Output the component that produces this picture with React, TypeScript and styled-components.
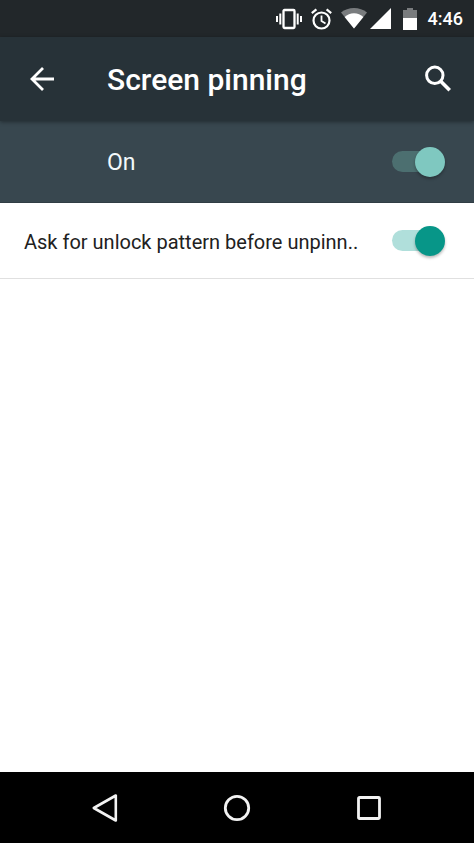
import React, { useState } from "react";
import styled, { createGlobalStyle } from "styled-components";

const GlobalStyle = createGlobalStyle`
  *, *::before, *::after { box-sizing: border-box; }
  body {
    margin: 0;
    background: #ffffff;
    font-family: Roboto, "Liberation Sans", sans-serif;
  }
`;

const Screen = styled.div`
  display: flex;
  flex-direction: column;
  min-height: 100vh;
`;

const StatusBar = styled.div`
  display: flex;
  align-items: center;
  justify-content: flex-end;
  height: 37px;
  padding-right: 11px;
  background: #22272a;
  color: #ffffff;

  svg { display: block; flex: none; }
`;

const Notifications = styled.div`
  display: flex;
  align-items: center;
  gap: 9px;
  margin-right: 9px;
`;

const Signals = styled.div`
  display: flex;
  align-items: center;
  gap: 3px;
  margin-right: 12px;
`;

const Clock = styled.time`
  margin-left: 11px;
  font-size: 18px;
  line-height: 24px;
  font-weight: 500;
`;

const AppBar = styled.header`
  display: flex;
  align-items: center;
  height: 84px;
  padding: 0 16px 0 22px;
  background: #273238;
  color: #ffffff;
  z-index: 1;
  box-shadow: 0 1px 4px rgba(0, 0, 0, 0.4);
`;

const IconButton = styled.button`
  display: flex;
  align-items: center;
  justify-content: center;
  width: 40px;
  height: 48px;
  padding: 0;
  border: 0;
  background: none;
  color: inherit;
  cursor: pointer;
`;

const Title = styled.h1`
  flex: 1;
  margin: 0 0 0 45px;
  padding-top: 2px;
  font-size: 30px;
  line-height: 40px;
  font-weight: 500;
`;

const SettingRow = styled.label<{ $primary?: boolean }>`
  display: flex;
  align-items: center;
  justify-content: space-between;
  height: ${(p) => (p.$primary ? 82 : 76)}px;
  padding: 0 29px 0 ${(p) => (p.$primary ? 107 : 24)}px;
  border-bottom: 1px solid ${(p) => (p.$primary ? "#303d44" : "#e0e0e0")};
  background: ${(p) => (p.$primary ? "#38474f" : "#ffffff")};
  color: ${(p) => (p.$primary ? "#f3f9fb" : "#212121")};
  font-size: ${(p) => (p.$primary ? 23 : 20)}px;
  line-height: 28px;
  cursor: pointer;
`;

const RowText = styled.span`
  padding-top: 2px;
  white-space: nowrap;
`;

const Switch = styled.input<{ $track: string; $thumb: string }>`
  appearance: none;
  display: flex;
  align-items: center;
  flex: none;
  width: 53px;
  height: 30px;
  margin: 0;
  border-radius: 15px;
  cursor: pointer;

  &::before {
    content: "";
    width: 48px;
    height: 21px;
    border-radius: 11px;
    background: ${(p) => p.$track};
  }

  &::after {
    content: "";
    flex: none;
    width: 30px;
    height: 30px;
    margin-left: -25px;
    border-radius: 50%;
    background: ${(p) => p.$thumb};
    box-shadow: 0 2px 3px rgba(0, 0, 0, 0.28);
  }

  &:not(:checked)::after {
    margin-left: -48px;
    background: #ececec;
  }
`;

const Content = styled.main`
  flex: 1;
  background: #ffffff;
`;

const NavBar = styled.nav`
  display: grid;
  grid-template-columns: repeat(3, 1fr);
  align-items: center;
  justify-items: center;
  height: 71px;
  padding: 0 39px;
  background: #000000;
  color: #f2f2f2;
`;

const VibrateIcon = () => (
  <svg width="26" height="22" viewBox="0 0 26 22" fill="none" stroke="currentColor" strokeWidth="2">
    <rect x="7.5" y="2" width="11" height="18" rx="1" strokeWidth="2.3" />
    <path d="M4.3 5.5v11M1 8v6M21.7 5.5v11M25 8v6" />
  </svg>
);

const AlarmIcon = () => (
  <svg width="21" height="22" viewBox="0 0 21 22" fill="none" stroke="currentColor" strokeWidth="2.2">
    <circle cx="10.5" cy="12.5" r="8" />
    <path d="M10.5 7.5v5.5l4 2.5" strokeWidth="1.8" />
    <path d="M.8 5.2l4.6-3.9M20.2 5.2l-4.6-3.9" />
  </svg>
);

const WifiIcon = () => (
  <svg width="26" height="21" viewBox="0 0 26 21">
    <path d="M13 20.5L0 4.5C3.6 1.6 8.1 0 13 0s9.4 1.6 13 4.5z" fill="#797c7e" />
    <path d="M13 20.5L3.6 9C6.2 6.7 9.4 5.3 13 5.3S19.8 6.7 22.4 9z" fill="#ffffff" />
  </svg>
);

const CellIcon = () => (
  <svg width="21" height="21" viewBox="0 0 21 21">
    <path d="M0 21L21 0v21z" fill="#ffffff" />
  </svg>
);

const BatteryIcon = () => (
  <svg width="14" height="22" viewBox="0 0 14 22">
    <path d="M4 0h6v2h4v8H0V2h4z" fill="#797c7e" />
    <path d="M0 10h14v12H0z" fill="#ffffff" />
  </svg>
);

const BackArrowIcon = () => (
  <svg width="24" height="24" viewBox="0 0 24 24" fill="none" stroke="currentColor" strokeWidth="2.8">
    <path d="M24 12H2.5M13 1L2 12l11 11" />
  </svg>
);

const SearchIcon = () => (
  <svg width="28" height="28" viewBox="0 0 28 28" fill="none" stroke="currentColor">
    <circle cx="10.8" cy="10.3" r="8.2" strokeWidth="3" />
    <path d="M16.5 16l9.2 9.2" strokeWidth="3.6" />
  </svg>
);

const NavBackIcon = () => (
  <svg width="26" height="28" viewBox="0 0 26 28" fill="none" stroke="currentColor" strokeWidth="2.6" strokeLinejoin="round">
    <path d="M23.8 1.5v25L1.8 14z" />
  </svg>
);

const NavHomeIcon = () => (
  <svg width="28" height="28" viewBox="0 0 28 28" fill="none" stroke="currentColor" strokeWidth="2.8">
    <circle cx="14" cy="14" r="11.7" />
  </svg>
);

const NavRecentsIcon = () => (
  <svg width="24" height="24" viewBox="0 0 24 24" fill="none" stroke="currentColor" strokeWidth="2.8">
    <rect x="1.5" y="1.5" width="21" height="21" rx="1" />
  </svg>
);

export default function App() {
  const [pinning, setPinning] = useState(true);
  const [askPattern, setAskPattern] = useState(true);

  return (
    <Screen>
      <GlobalStyle />
      <StatusBar>
        <Notifications>
          <VibrateIcon />
          <AlarmIcon />
        </Notifications>
        <Signals>
          <WifiIcon />
          <CellIcon />
        </Signals>
        <BatteryIcon />
        <Clock>4:46</Clock>
      </StatusBar>
      <AppBar>
        <IconButton type="button" aria-label="Navigate up">
          <BackArrowIcon />
        </IconButton>
        <Title>Screen pinning</Title>
        <IconButton type="button" aria-label="Search">
          <SearchIcon />
        </IconButton>
      </AppBar>
      <Content>
        <SettingRow $primary>
          <RowText>{pinning ? "On" : "Off"}</RowText>
          <Switch
            type="checkbox"
            role="switch"
            $track="#4c6f70"
            $thumb="#7fc8c0"
            checked={pinning}
            onChange={(e) => setPinning(e.target.checked)}
          />
        </SettingRow>
        <SettingRow>
          <RowText>Ask for unlock pattern before unpinn..</RowText>
          <Switch
            type="checkbox"
            role="switch"
            $track="#b0dfdb"
            $thumb="#079688"
            checked={askPattern}
            onChange={(e) => setAskPattern(e.target.checked)}
          />
        </SettingRow>
      </Content>
      <NavBar>
        <IconButton type="button" aria-label="Back">
          <NavBackIcon />
        </IconButton>
        <IconButton type="button" aria-label="Home">
          <NavHomeIcon />
        </IconButton>
        <IconButton type="button" aria-label="Recent apps">
          <NavRecentsIcon />
        </IconButton>
      </NavBar>
    </Screen>
  );
}
